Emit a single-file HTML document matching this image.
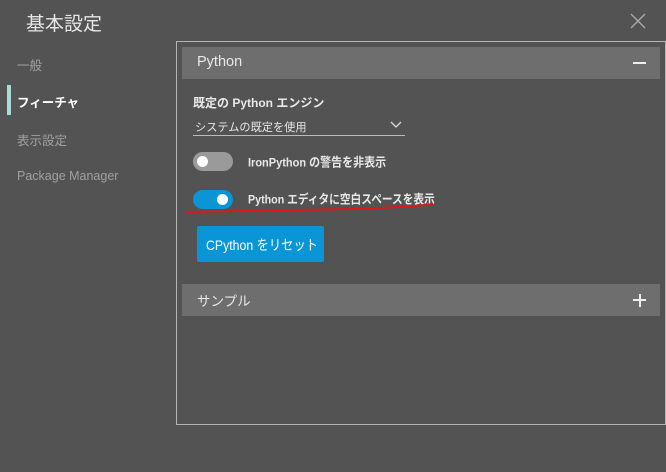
<!DOCTYPE html><html><head><style>
body{margin:0;width:666px;height:472px;background:#535353;font-family:"Liberation Sans","Noto Sans CJK JP",sans-serif;position:relative;overflow:hidden;color:#e8e8e8}
.a{position:absolute;white-space:nowrap}
.nav{font-size:12.5px;color:#a0a0a0}
.tg{position:absolute;width:40px;height:19px;border-radius:10px}
.tg i{position:absolute;top:4px;width:11px;height:11px;border-radius:50%;background:#fff}
</style></head><body>
<div class="a" style="left:26px;top:9px;font-size:19px;color:#e6e6e6">基本設定</div>
<svg class="a" style="left:629px;top:12px" width="18" height="18"><path d="M2 2L16 16M16 2L2 16" stroke="#a8a8a8" stroke-width="1.4"/></svg>
<div class="a nav" style="left:17px;top:55px">一般</div>
<div class="a" style="left:7px;top:85px;width:4px;height:30px;background:#a8dcd4"></div>
<div class="a" style="left:17px;top:92px;font-size:12.5px;color:#fff;font-weight:bold">フィーチャ</div>
<div class="a nav" style="left:17px;top:130px">表示設定</div>
<div class="a nav" style="left:17px;top:169px">Package Manager</div>
<div class="a" style="left:176px;top:41px;width:488px;height:382px;border:1px solid #b4b4b4"></div>
<div class="a" style="left:182px;top:47px;width:478px;height:32px;background:#6e6e6e"></div>
<div class="a" style="left:197px;top:54px;font-size:14.5px">Python</div>
<div class="a" style="left:633px;top:62px;width:13px;height:2px;background:#eee"></div>
<div class="a" style="left:193px;top:94px;font-size:12px;font-weight:bold">既定の Python エンジン</div>
<div class="a" style="left:195px;top:119px;font-size:11.2px">システムの既定を使用</div>
<div class="a" style="left:193px;top:135px;width:212px;height:1px;background:#bbb"></div>
<svg class="a" style="left:390px;top:121px" width="12" height="8"><path d="M1 1L6 6L11 1" stroke="#ddd" stroke-width="1.3" fill="none"/></svg>
<div class="tg" style="left:193px;top:152px;background:#9a9a9a"><i style="left:4px"></i></div>
<div class="a" style="left:248px;top:153px;font-size:11px;font-weight:bold;transform:scaleY(1.12);transform-origin:left top">IronPython の警告を非表示</div>
<div class="tg" style="left:193px;top:190px;background:#0a95d6"><i style="left:24px"></i></div>
<div class="a" style="left:248px;top:191px;font-size:10.7px;font-weight:bold;transform:scaleY(1.15);transform-origin:left top">Python エディタに空白スペースを表示</div>
<svg class="a" style="left:180px;top:202px" width="260" height="14"><path d="M5 10C60 9 120 8 170 7C200 6 230 5 253 2" stroke="#e0161b" stroke-width="2" fill="none"/></svg>
<div class="a" style="left:197px;top:226px;width:127px;height:36px;background:#0a95d6;border-radius:2px"></div>
<div class="a" style="left:206px;top:234px;font-size:12.3px;color:#fff;transform:scaleY(1.15);transform-origin:left top">CPython をリセット</div>
<div class="a" style="left:182px;top:284px;width:478px;height:32px;background:#6e6e6e"></div>
<div class="a" style="left:197px;top:290px;font-size:13.5px">サンプル</div>
<div class="a" style="left:633px;top:299px;width:13px;height:2px;background:#eee"></div>
<div class="a" style="left:638.5px;top:293.5px;width:2px;height:13px;background:#eee"></div>
</body></html>
